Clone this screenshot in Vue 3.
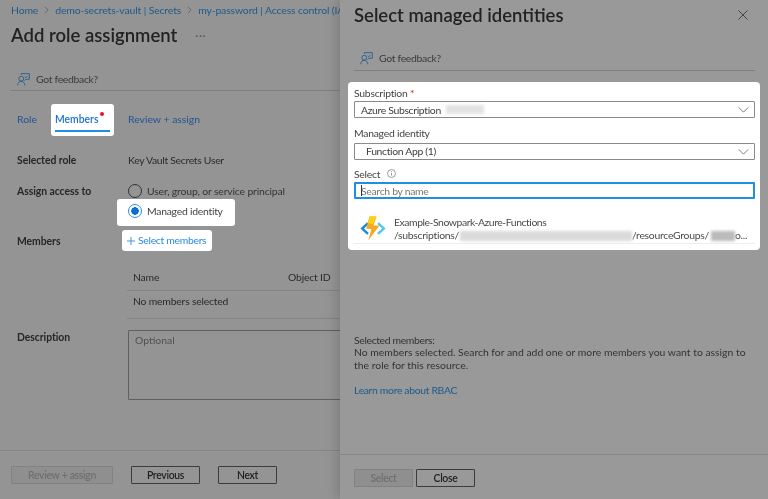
<script setup>
import { ref } from 'vue'

const crumbs = ['Home', 'demo-secrets-vault | Secrets', 'my-password | Access control (IAM)']
const tabs = ref([
  { name: 'Role', active: false },
  { name: 'Members', active: true },
  { name: 'Review + assign', active: false }
])
const accessOptions = ref([
  { label: 'User, group, or service principal', checked: false },
  { label: 'Managed identity', checked: true }
])
</script>

<template>
  <div class="page">
    <main class="blade">
      <nav class="crumbs">
        <template v-for="(c, i) in crumbs" :key="c">
          <svg v-if="i > 0" class="crumb-sep" viewBox="0 0 6 10"><path d="M1 1l4 4-4 4" /></svg>
          <a>{{ c }}</a>
        </template>
      </nav>
      <div class="title-row">
        <h1>Add role assignment</h1>
        <span class="more">···</span>
      </div>
      <div class="feedback blade-fb">
        <svg class="fb-icon" viewBox="0 0 14 14">
          <path d="M4.500 2V.7h8.800v6H9.600L8 8.200" />
          <circle cx="4.600" cy="6.200" r="2.600" />
          <path d="M.7 13.300c.3-2.800 1.800-4.300 3.900-4.300s3.600 1.500 3.900 4.300" />
          <path d="M8.300 4l1.200 1.100 1.800-2" />
        </svg>
        <span>Got feedback?</span>
      </div>

      <div class="tabs">
        <div v-for="t in tabs" :key="t.name" class="tab" :class="{ active: t.active }">
          {{ t.name }}
          <i v-if="t.active" class="dot"></i>
        </div>
      </div>

      <div class="row role-row">
        <label>Selected role</label>
        <span>Key Vault Secrets User</span>
      </div>
      <div class="row access-row">
        <label>Assign access to</label>
        <div class="radios">
          <div v-for="o in accessOptions" :key="o.label" class="radio-line" :class="{ on: o.checked }">
            <i class="radio"></i>
            <span>{{ o.label }}</span>
          </div>
        </div>
      </div>
      <div class="row members-row">
        <label>Members</label>
        <button class="add-btn">
          <svg viewBox="0 0 9 9"><path d="M4.500 0v9M0 4.500h9" /></svg>
          Select members
        </button>
      </div>
      <div class="members-table">
        <div class="thead"><span class="col-name">Name</span><span>Object ID</span></div>
        <div class="tbody">No members selected</div>
      </div>
      <div class="row desc-row">
        <label>Description</label>
        <textarea placeholder="Optional"></textarea>
      </div>

      <footer class="blade-foot">
        <button class="btn disabled review">Review + assign</button>
        <button class="btn prev">Previous</button>
        <button class="btn next">Next</button>
      </footer>
    </main>

    <aside class="panel">
      <header class="panel-head">
        <h2>Select managed identities</h2>
        <svg class="close" viewBox="0 0 10 10"><path d="M.5.500l9 9M9.500.500l-9 9" /></svg>
      </header>
      <div class="feedback panel-fb">
        <svg class="fb-icon" viewBox="0 0 14 14">
          <path d="M4.500 2V.7h8.800v6H9.600L8 8.200" />
          <circle cx="4.600" cy="6.200" r="2.600" />
          <path d="M.7 13.300c.3-2.800 1.800-4.300 3.900-4.300s3.600 1.500 3.900 4.300" />
          <path d="M8.300 4l1.200 1.100 1.800-2" />
        </svg>
        <span>Got feedback?</span>
      </div>

      <section class="card">
        <div class="field-label">Subscription <b>*</b></div>
        <div class="select">
          <span>Azure Subscription</span>
          <i class="redact sub-redact"></i>
          <svg class="chev" viewBox="0 0 12 7"><path d="M.5.500L6 6l5.500-5.500" /></svg>
        </div>
        <div class="field-label next-label">Managed identity</div>
        <div class="select indent">
          <span>Function App (1)</span>
          <svg class="chev" viewBox="0 0 12 7"><path d="M.5.500L6 6l5.500-5.500" /></svg>
        </div>
        <div class="field-label select-label">
          Select
          <svg class="info" viewBox="0 0 10 10">
            <circle cx="5" cy="5" r="4.400" />
            <path d="M5 4.300v3M5 2.400v1" />
          </svg>
        </div>
        <div class="search">
          <input placeholder="Search by name" />
          <i class="caret"></i>
        </div>
        <div class="result">
          <svg class="fn-icon" viewBox="0 0 28 26">
            <path d="M7.900 6.500L.9 13l7 6.400 1.800-1.700L4.600 13l5-4.800z" fill="#1e88d8" />
            <path d="M20.100 6.500l7 6.500-7 6.400-1.800-1.700 5.100-4.700-5-4.800z" fill="#50c8f0" />
            <path d="M17.700.5h-7.400L6.900 13.200l5.500.2L9 25.500l11.800-15.700h-6.300z" fill="#f9a825" />
            <path d="M17.700.5h-7.400L8.500 7.500l5.500.8 3.700-7.800z" fill="#fcd116" />
          </svg>
          <div class="result-text">
            <div class="result-name">Example-Snowpark-Azure-Functions</div>
            <div class="path">/subscriptions/<i class="redact id-redact"></i>/resourceGroups/<i class="redact rg-redact"></i>o...</div>
          </div>
        </div>
      </section>

      <div class="selected">
        <div class="sel-title">Selected members:</div>
        <div>No members selected. Search for and add one or more members you want to assign to the role for this resource.</div>
        <a>Learn more about RBAC</a>
      </div>

      <footer class="panel-foot">
        <button class="btn disabled sel">Select</button>
        <button class="btn close-btn">Close</button>
      </footer>
    </aside>
  </div>
</template>

<style>
html, body {
  margin: 0;
  background: #999;
}
</style>

<style scoped>
.page {
  width: 768px;
  height: 499px;
  display: flex;
  overflow: hidden;
  background: #949494;
  color: #2b2b2b;
  font-family: Lato, "Open Sans", "Liberation Sans", sans-serif;
  font-size: 10.400px;
  letter-spacing: -0.3px;
  filter: blur(0.35px);
}
.blade {
  width: 340px;
  height: 499px;
  flex: none;
  display: flex;
  flex-direction: column;
  overflow: hidden;
  padding-left: 11px;
  box-sizing: border-box;
}
.crumbs {
  height: 20px;
  display: flex;
  align-items: center;
  gap: 6px;
  white-space: nowrap;
  color: #1c5a8c;
  letter-spacing: -0.12px;
}
.crumb-sep {
  width: 5px;
  height: 8px;
  flex: none;
  fill: none;
  stroke: #5f5f5f;
}
.title-row {
  height: 30px;
  display: flex;
  align-items: center;
}
h1, h2 {
  margin: 0;
  font-size: 18.500px;
  font-weight: 600;
  letter-spacing: 0;
  color: #222;
}
.more {
  margin-left: 18px;
  font-size: 12px;
  letter-spacing: 0.5px;
  color: #555;
}
.feedback {
  margin-top: 16px;
  height: 25px;
  width: 329px;
  box-sizing: border-box;
  display: flex;
  align-items: center;
  padding: 0 0 0 6px;
  gap: 6px;
  border-bottom: 1px solid #7f7f7f;
  color: #3a3a3a;
  flex: none;
}
.blade-fb {
  padding-top: 2px;
}
.fb-icon {
  width: 13px;
  height: 13px;
  fill: none;
  stroke: #1c5a8c;
  stroke-width: 0.9;
}
.tabs {
  margin-top: 13px;
  height: 32px;
  display: flex;
  flex: none;
  padding-left: 6px;
  align-items: stretch;
  letter-spacing: 0;
}
.tab {
  line-height: 30px;
  width: 34px;
  color: #1f5395;
  white-space: nowrap;
}
.tab.active {
  position: relative;
  width: 63px;
  box-sizing: border-box;
  padding-left: 4px;
  background: #fff;
  border-radius: 3px;
  color: #1a6fd8;
  font-weight: 600;
  margin-right: 14px;
}
.tab.active::after {
  content: "";
  position: absolute;
  left: 4px;
  right: 4px;
  bottom: 4px;
  height: 2px;
  background: #1e90e8;
}
.dot {
  position: absolute;
  left: 49px;
  top: 8px;
  width: 4px;
  height: 4px;
  border-radius: 50%;
  background: #e81123;
}
.row {
  display: flex;
  flex: none;
  padding-left: 6px;
}
.row label {
  width: 111px;
  flex: none;
  font-weight: 700;
  letter-spacing: -0.05px;
  color: #262626;
}
.role-row {
  margin-top: 14px;
  line-height: 20px;
}
.access-row {
  margin-top: 12px;
  line-height: 18px;
}
.radios {
  display: flex;
  flex-direction: column;
}
.radio-line {
  display: flex;
  align-items: center;
  height: 18px;
  gap: 5px;
  white-space: nowrap;
  color: #333;
  letter-spacing: -0.15px;
}
.radio-line.on {
  height: 27px;
  margin: -1px 0 0 -11px;
  padding: 0 13px 3px 11px;
  width: 118px;
  box-sizing: border-box;
  background: #fff;
  border-radius: 3px;
  color: #444;
  letter-spacing: -0.25px;
}
.radio {
  width: 12px;
  height: 12px;
  flex: none;
  border: 1px solid #333;
  border-radius: 50%;
}
.on .radio {
  border-color: #2a90e0;
  background: radial-gradient(circle, #0a6fd0 0 3.500px, #fff 4px);
}
.members-row {
  margin-top: 4px;
  height: 21px;
  line-height: 21px;
}
.members-row label {
  line-height: 22px;
}
.add-btn {
  margin-left: -6px;
  width: 90px;
  height: 21px;
  display: flex;
  align-items: center;
  gap: 3px;
  padding: 0 0 0 5px;
  border: none;
  border-radius: 3px;
  background: #fff;
  color: #2a8ce0;
  font: inherit;
  letter-spacing: inherit;
  white-space: nowrap;
}
.add-btn svg {
  width: 8px;
  height: 8px;
  flex: none;
  stroke: #2a8ce0;
}
.members-table {
  margin: 16px 0 0 116px;
  flex: none;
  width: 300px;
  letter-spacing: -0.2px;
}
.thead {
  height: 23px;
  line-height: 21px;
  padding-left: 6px;
  border-bottom: 1px solid #848484;
  display: flex;
}
.col-name {
  width: 155px;
}
.tbody {
  height: 27px;
  line-height: 20px;
  padding-left: 6px;
  border-bottom: 1px solid #848484;
}
.desc-row {
  margin-top: 11px;
  line-height: 14px;
}
textarea {
  width: 300px;
  height: 70px;
  box-sizing: border-box;
  padding: 2px 6px;
  border: 1px solid #5f5f5f;
  background: transparent;
  border-radius: 1px;
  font: inherit;
  resize: none;
  flex: none;
}
textarea::placeholder {
  color: #505050;
  opacity: 1;
}
.blade-foot {
  margin: auto 0 0 -11px;
  height: 49px;
  box-sizing: border-box;
  border-top: 1px solid #858585;
  padding: 15px 0 0 11px;
  display: flex;
  flex: none;
}
.btn {
  height: 18px;
  box-sizing: border-box;
  padding: 0;
  border: 1px solid #3c3c3c;
  border-radius: 1px;
  background: transparent;
  color: #222;
  font: inherit;
  font-weight: 600;
  letter-spacing: -0.3px;
}
.btn.disabled {
  border-color: #828282;
  background: #8f8f8f;
  color: #6f6f6f;
}
.review {
  width: 102px;
}
.prev {
  width: 69px;
  margin-left: 18px;
}
.next {
  width: 59px;
  margin-left: 18px;
}
.panel {
  width: 428px;
  height: 499px;
  flex: none;
  display: flex;
  flex-direction: column;
  background: #999;
  box-shadow: -4px 0 10px rgba(0, 0, 0, 0.14);
  box-sizing: border-box;
  position: relative;
}
.panel-head {
  height: 30px;
  display: flex;
  align-items: center;
  justify-content: space-between;
  padding: 0 20px 0 14px;
  flex: none;
}
.close {
  width: 10px;
  height: 10px;
  fill: none;
  stroke: #444;
}
.panel-fb {
  margin: 16px 0 0 14px;
  width: 401px;
}
.card {
  margin: 11px 0 0 8px;
  width: 411.500px;
  height: 167.500px;
  box-sizing: border-box;
  flex: none;
  padding: 4px 5px 0 6px;
  background: #fff;
  border-radius: 4px;
  color: #444;
}
.field-label {
  height: 15px;
  line-height: 14px;
  letter-spacing: -0.25px;
}
.field-label b {
  color: #d01818;
  font-weight: 400;
}
.next-label {
  margin-top: 7px;
  height: 17.500px;
  line-height: 16px;
}
.select-label {
  display: flex;
  align-items: center;
  gap: 7px;
  margin-top: 6px;
  height: 16.500px;
}
.select {
  height: 17px;
  box-sizing: border-box;
  border: 1px solid #8a8a8a;
  border-radius: 1px;
  padding-left: 6px;
  display: flex;
  align-items: center;
  position: relative;
  color: #3c3c3c;
  letter-spacing: -0.33px;
}
.select.indent {
  padding-left: 11px;
}
.chev {
  position: absolute;
  right: 5px;
  top: 5px;
  width: 11px;
  height: 6px;
  fill: none;
  stroke: #666;
}
.redact {
  display: inline-block;
  height: 9px;
  background: #e2e2e2;
  filter: blur(1.500px);
}
.sub-redact {
  width: 38px;
  margin-left: 5px;
}
.info {
  width: 9px;
  height: 9px;
  fill: none;
  stroke: #777;
  stroke-width: 0.8;
}
.search {
  position: relative;
  height: 17px;
}
.search input {
  width: 100%;
  height: 17px;
  box-sizing: border-box;
  border: 2px solid #1f8fe0;
  border-radius: 1px;
  padding: 0 5px;
  outline: none;
  font: inherit;
  letter-spacing: inherit;
}
.search input::placeholder {
  color: #777;
  opacity: 1;
}
.caret {
  position: absolute;
  left: 7px;
  top: 3px;
  width: 1px;
  height: 11px;
  background: #333;
}
.result {
  margin-top: 17px;
  height: 27px;
  display: flex;
  gap: 7px;
  padding-left: 5px;
  border-bottom: 1px solid #eee;
}
.fn-icon {
  width: 28px;
  height: 25px;
  flex: none;
}
.result-text {
  line-height: 13px;
  white-space: nowrap;
  color: #4a4a4a;
}
.result-name {
  letter-spacing: -0.44px;
}
.path {
  display: flex;
  align-items: center;
  letter-spacing: -0.27px;
}
.id-redact {
  width: 172px;
  height: 10px;
  margin-left: 1px;
  background: #dadada;
}
.rg-redact {
  width: 24px;
  height: 10px;
  margin-left: 2px;
  background: #bbb;
}
.selected {
  margin: 84px 0 0 14px;
  width: 400px;
  line-height: 12.500px;
  color: #333;
  letter-spacing: 0;
}
.sel-title {
  letter-spacing: -0.35px;
}
.selected a {
  display: block;
  margin-top: 12.500px;
  color: #1c5a8c;
  letter-spacing: -0.33px;
}
.panel-foot {
  margin: auto 0 0 0;
  height: 45px;
  box-sizing: border-box;
  border-top: 1px solid #878787;
  padding: 14px 0 0 14px;
  display: flex;
  gap: 3px;
  flex: none;
}
.sel {
  width: 59px;
}
.close-btn {
  width: 59px;
}
</style>
